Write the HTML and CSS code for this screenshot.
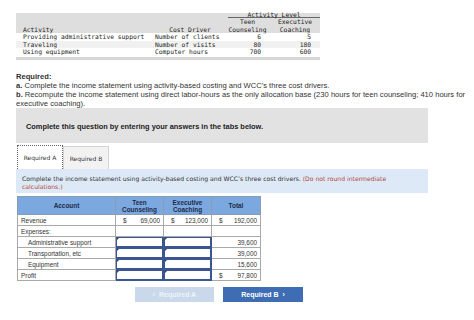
FILE: index.html
```html
<!DOCTYPE html>
<html lang="en">
  <head>
    <meta charset="UTF-8" />
    <meta name="viewport" content="width=device-width, initial-scale=1.0" />
    <title>Activity-based costing</title>
    <link rel="stylesheet" href="styles.css">
  </head>
  <body>
    <main class="page">
      <table class="drivers">
        <colgroup>
          <col class="d-act" />
          <col class="d-drv" />
          <col class="d-teen" />
          <col class="d-exec" />
        </colgroup>
        <thead>
          <tr class="lvl">
            <th></th>
            <th></th>
            <th colspan="2"><span class="lvl-cap">Activity Level</span></th>
          </tr>
          <tr>
            <th></th>
            <th></th>
            <th>Teen</th>
            <th>Executive</th>
          </tr>
          <tr>
            <th class="left">Activity</th>
            <th>Cost Driver</th>
            <th>Counseling</th>
            <th>Coaching</th>
          </tr>
        </thead>
        <tbody>
          <tr>
            <td class="left">Providing administrative support</td>
            <td>Number of clients</td>
            <td class="num">6</td>
            <td class="num">5</td>
          </tr>
          <tr class="alt">
            <td class="left">Traveling</td>
            <td>Number of visits</td>
            <td class="num">80</td>
            <td class="num">180</td>
          </tr>
          <tr>
            <td class="left">Using equipment</td>
            <td>Computer hours</td>
            <td class="num">700</td>
            <td class="num">600</td>
          </tr>
          <tr class="gap"><td colspan="4"></td></tr>
          <tr class="bar"><td colspan="4"></td></tr>
        </tbody>
      </table>

      <section class="required">
        <p class="req-title">Required:</p>
        <p><b>a.</b> Complete the income statement using activity-based costing and WCC’s three cost drivers.</p>
        <p><b>b.</b> Recompute the income statement using direct labor-hours as the only allocation base (230 hours for teen counseling; 410 hours for executive coaching).</p>
      </section>

      <div class="notice">Complete this question by entering your answers in the tabs below.</div>

      <ul class="tabs">
        <li class="tab active">Required A</li>
        <li class="tab">Required B</li>
      </ul>

      <div class="hint">
        Complete the income statement using activity-based costing and WCC’s three cost drivers.
        <span class="warn">(Do not round intermediate calculations.)</span>
      </div>

      <table class="income">
        <colgroup>
          <col class="i-acc" />
          <col class="i-val" />
          <col class="i-val" />
          <col class="i-tot" />
        </colgroup>
        <thead>
          <tr>
            <th>Account</th>
            <th>Teen<br />Counseling</th>
            <th>Executive<br />Coaching</th>
            <th>Total</th>
          </tr>
        </thead>
        <tbody>
          <tr>
            <td>Revenue</td>
            <td><div class="amt"><span>$</span><span>69,000</span></div></td>
            <td><div class="amt"><span>$</span><span>123,000</span></div></td>
            <td><div class="amt"><span>$</span><span>192,000</span></div></td>
          </tr>
          <tr>
            <td>Expenses:</td>
            <td></td>
            <td></td>
            <td></td>
          </tr>
          <tr>
            <td class="sub">Administrative support</td>
            <td class="entry"><div class="field"></div></td>
            <td class="entry"><div class="field"></div></td>
            <td><div class="amt"><span></span><span>39,600</span></div></td>
          </tr>
          <tr>
            <td class="sub">Transportation, etc</td>
            <td class="entry"><div class="field"></div></td>
            <td class="entry"><div class="field"></div></td>
            <td><div class="amt"><span></span><span>39,000</span></div></td>
          </tr>
          <tr>
            <td class="sub">Equipment</td>
            <td class="entry"><div class="field"></div></td>
            <td class="entry"><div class="field"></div></td>
            <td><div class="amt"><span></span><span>15,600</span></div></td>
          </tr>
          <tr>
            <td>Profit</td>
            <td class="entry"><div class="field"></div></td>
            <td class="entry"><div class="field"></div></td>
            <td><div class="amt"><span>$</span><span>97,800</span></div></td>
          </tr>
        </tbody>
      </table>

      <div class="nav">
        <button class="btn prev" type="button">‹&nbsp;&nbsp;Required A</button>
        <button class="btn next" type="button">Required B&nbsp;&nbsp;›</button>
      </div>
    </main>
  </body>
</html>
```

FILE: styles.css
```css
* {
  box-sizing: border-box;
}
body {
  margin: 0;
  padding: 0;
  background-color: #fff;
  color: #333;
  font-family: "Liberation Sans", Arial, sans-serif;
}
p {
  margin: 0;
}
ul {
  list-style: none;
  margin: 0;
  padding: 0;
}
.page {
  padding: 13px 8px 0 16px;
}

/* cost driver table */
.drivers {
  --band: #dedede;
  width: 304px;
  border-collapse: collapse;
  table-layout: fixed;
  font-family: "DejaVu Sans Mono", "Liberation Mono", monospace;
  font-size: 6.3px;
  color: #222;
}
.drivers th,
.drivers td {
  padding: 0;
  height: 7.5px;
  line-height: 7.5px;
  white-space: nowrap;
  overflow: visible;
}
.drivers th {
  font-weight: normal;
  text-align: center;
  background-color: var(--band);
}
.drivers .left {
  text-align: left;
  padding-left: 7px;
}
.d-act {
  width: 139px;
}
.d-drv {
  width: 70px;
}
.d-teen {
  width: 45px;
}
.d-exec {
  width: 50px;
}
.drivers .lvl th {
  height: 5px;
  line-height: 5px;
}
.lvl-cap {
  display: block;
  margin-left: 3px;
  border-bottom: 1px solid #666;
  line-height: 4px;
}
.drivers .num {
  text-align: right;
  padding-right: 9px;
}
.drivers .alt td {
  background-color: #f1f1f1;
}
.drivers .gap td {
  height: 1.5px;
  line-height: 0;
}
.drivers .bar td {
  height: 3px;
  line-height: 0;
  background-color: #d6d6d6;
}

/* required text */
.required {
  margin-top: 12px;
  font-size: 7.6px;
  line-height: 9px;
  color: #333;
}
.req-title {
  font-weight: bold;
}
.notice {
  width: 412px;
  background-color: #e2e2e2;
  padding: 14px 10px 12px;
  font-size: 7.4px;
  line-height: 9px;
  font-weight: bold;
  color: #222;
}

/* tabs */
.tabs {
  display: flex;
  margin-top: 2px;
  padding-left: 1px;
  font-family: "DejaVu Sans", Verdana, sans-serif;
  font-size: 6px;
  color: #333;
}
.tab {
  width: 46px;
  height: 23px;
  margin-top: 1px;
  display: flex;
  align-items: center;
  justify-content: center;
  background-color: #f2f2f2;
  border: 1px solid #d4d4d4;
  border-bottom: none;
}
.tab.active {
  height: 24px;
  margin-top: 0;
  background-color: #fff;
  border: 1px dotted #666;
  border-bottom: none;
}
.hint {
  width: 412px;
  background-color: #dde9f6;
  padding: 6px 6px 3px;
  font-family: "DejaVu Sans", Verdana, sans-serif;
  font-size: 6.1px;
  line-height: 7.5px;
  color: #333;
}
.warn {
  color: #b5453b;
}

/* income statement */
.income {
  margin: 3px 0 0 1px;
  width: 243px;
  border-collapse: collapse;
  table-layout: fixed;
  font-size: 6.4px;
  color: #333;
}
.i-acc {
  width: 98px;
}
.i-val {
  width: 48px;
}
.i-tot {
  width: 49px;
}
.income th {
  height: 18px;
  padding: 0;
  background-color: #7ca8e0;
  border: 1px solid #8a9bb5;
  color: #1d2c48;
  font-weight: bold;
  line-height: 7px;
}
.income td {
  height: 11px;
  padding: 0 3px;
  border: 1px solid #a9a9a9;
  line-height: 9px;
  white-space: nowrap;
}
.income .sub {
  padding-left: 10px;
}
.amt {
  display: flex;
  justify-content: space-between;
  padding-left: 4px;
}
.income .entry {
  padding: 0;
  border-color: #3b5591;
}
.field {
  position: relative;
  height: 10px;
  border: 1px solid #3b5591;
  background-color: #fff;
}
.field::before {
  content: "";
  position: absolute;
  top: 0;
  left: 0;
  border-top: 2px solid #2c3f6e;
  border-right: 2px solid transparent;
}

/* navigation buttons */
.nav {
  display: flex;
  justify-content: center;
  gap: 9px;
  width: 412px;
  padding-right: 6px;
  margin-top: 6px;
}
.btn {
  width: 79px;
  height: 15px;
  padding: 0;
  border: none;
  font-family: "Liberation Sans", Arial, sans-serif;
  font-size: 7px;
  font-weight: bold;
  color: #fff;
}
.prev {
  background-color: #c9d8eb;
  color: #eef3f9;
}
.next {
  width: 80px;
  background-color: #3e6db4;
}
```
